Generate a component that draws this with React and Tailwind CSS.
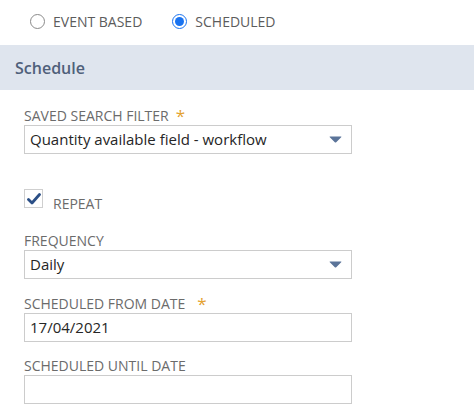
import React, { useState } from "react";

function Arrow() {
  return (
    <svg width="13" height="7" viewBox="0 0 13 7" className="shrink-0">
      <path d="M1 0.5 H12 Q12.8 0.5 12.2 1.2 L7.2 6.2 Q6.5 6.9 5.8 6.2 L0.8 1.2 Q0.2 0.5 1 0.5 Z" fill="#5b7499" />
    </svg>
  );
}

function Label({ children, required, wide }) {
  return (
    <div className="flex items-center h-[19px] text-[14px] text-[#6b6b6b] uppercase leading-5">
      <span>{children}</span>
      {required && (
        <span className={wide ? "ml-[12px] text-[#e4a230] text-[17px] leading-5" : "ml-[7px] text-[#e4a230] text-[17px] leading-5"}>
          *
        </span>
      )}
    </div>
  );
}

function Select({ value }) {
  return (
    <div className="flex items-center justify-between h-[29px] border border-[#cccccc] bg-white pl-[5px] pr-[9px]">
      <span className="text-[15px] text-[#262626]">{value}</span>
      <Arrow />
    </div>
  );
}

function Input({ value }) {
  return (
    <div className="flex items-center h-[29px] border border-[#cccccc] bg-white pl-[5px]">
      <span className="text-[15px] text-[#262626]">{value}</span>
    </div>
  );
}

export default function App() {
  const [mode, setMode] = useState("scheduled");
  const [repeat, setRepeat] = useState(true);
  return (
    <div className="w-[474px] h-[414px] bg-white font-['Open_Sans',sans-serif] overflow-hidden">
      {/* Trigger type */}
      <div className="h-[45px] flex items-center pl-[30px] pb-[2px] text-[14px] text-[#5c5c5c]">
        <button className="flex items-center gap-[8px]" onClick={() => setMode("event")}>
          <span className="w-[15px] h-[15px] rounded-full border border-[#8a8a8a] bg-white flex items-center justify-center">
            {mode === "event" && <span className="w-[9px] h-[9px] rounded-full bg-[#1a73f0]" />}
          </span>
          <span>EVENT BASED</span>
        </button>
        <button className="flex items-center gap-[8px] ml-[30px]" onClick={() => setMode("scheduled")}>
          <span className="w-[15px] h-[15px] rounded-full border border-[#1a73f0] bg-white flex items-center justify-center">
            {mode === "scheduled" && <span className="w-[9px] h-[9px] rounded-full bg-[#1a73f0]" />}
          </span>
          <span>SCHEDULED</span>
        </button>
      </div>

      {/* Section header */}
      <div className="h-[45px] bg-[#dfe5ee] flex items-center pl-[15px]">
        <span className="text-[16px] font-semibold text-[#4f607a]">Schedule</span>
      </div>

      <div className="px-[24px] w-[376px]">
        <div className="mt-[16px]">
          <Label required>Saved Search Filter</Label>
          <Select value="Quantity available field - workflow" />
        </div>

        <div className="mt-[35px] flex items-start" onClick={() => setRepeat(!repeat)}>
          <span className="w-[19px] h-[19px] border border-[#cfcfcf] bg-white flex items-center justify-center">
            {repeat && (
              <svg width="14" height="12" viewBox="0 0 14 12">
                <path d="M1.5 6.5 L5 10 L12.5 1.5" fill="none" stroke="#2b4f86" strokeWidth="2.8" strokeLinecap="round" strokeLinejoin="round" />
              </svg>
            )}
          </span>
          <span className="ml-[10px] mt-[5px] leading-[19px] text-[14px] text-[#6b6b6b]">REPEAT</span>
        </div>

        <div className="mt-[18px]">
          <Label>Frequency</Label>
          <Select value="Daily" />
        </div>

        <div className="mt-[15px]">
          <Label required wide>Scheduled From Date</Label>
          <Input value="17/04/2021" />
        </div>

        <div className="mt-[14px]">
          <Label>Scheduled Until Date</Label>
          <Input value="" />
        </div>
      </div>
    </div>
  );
}
